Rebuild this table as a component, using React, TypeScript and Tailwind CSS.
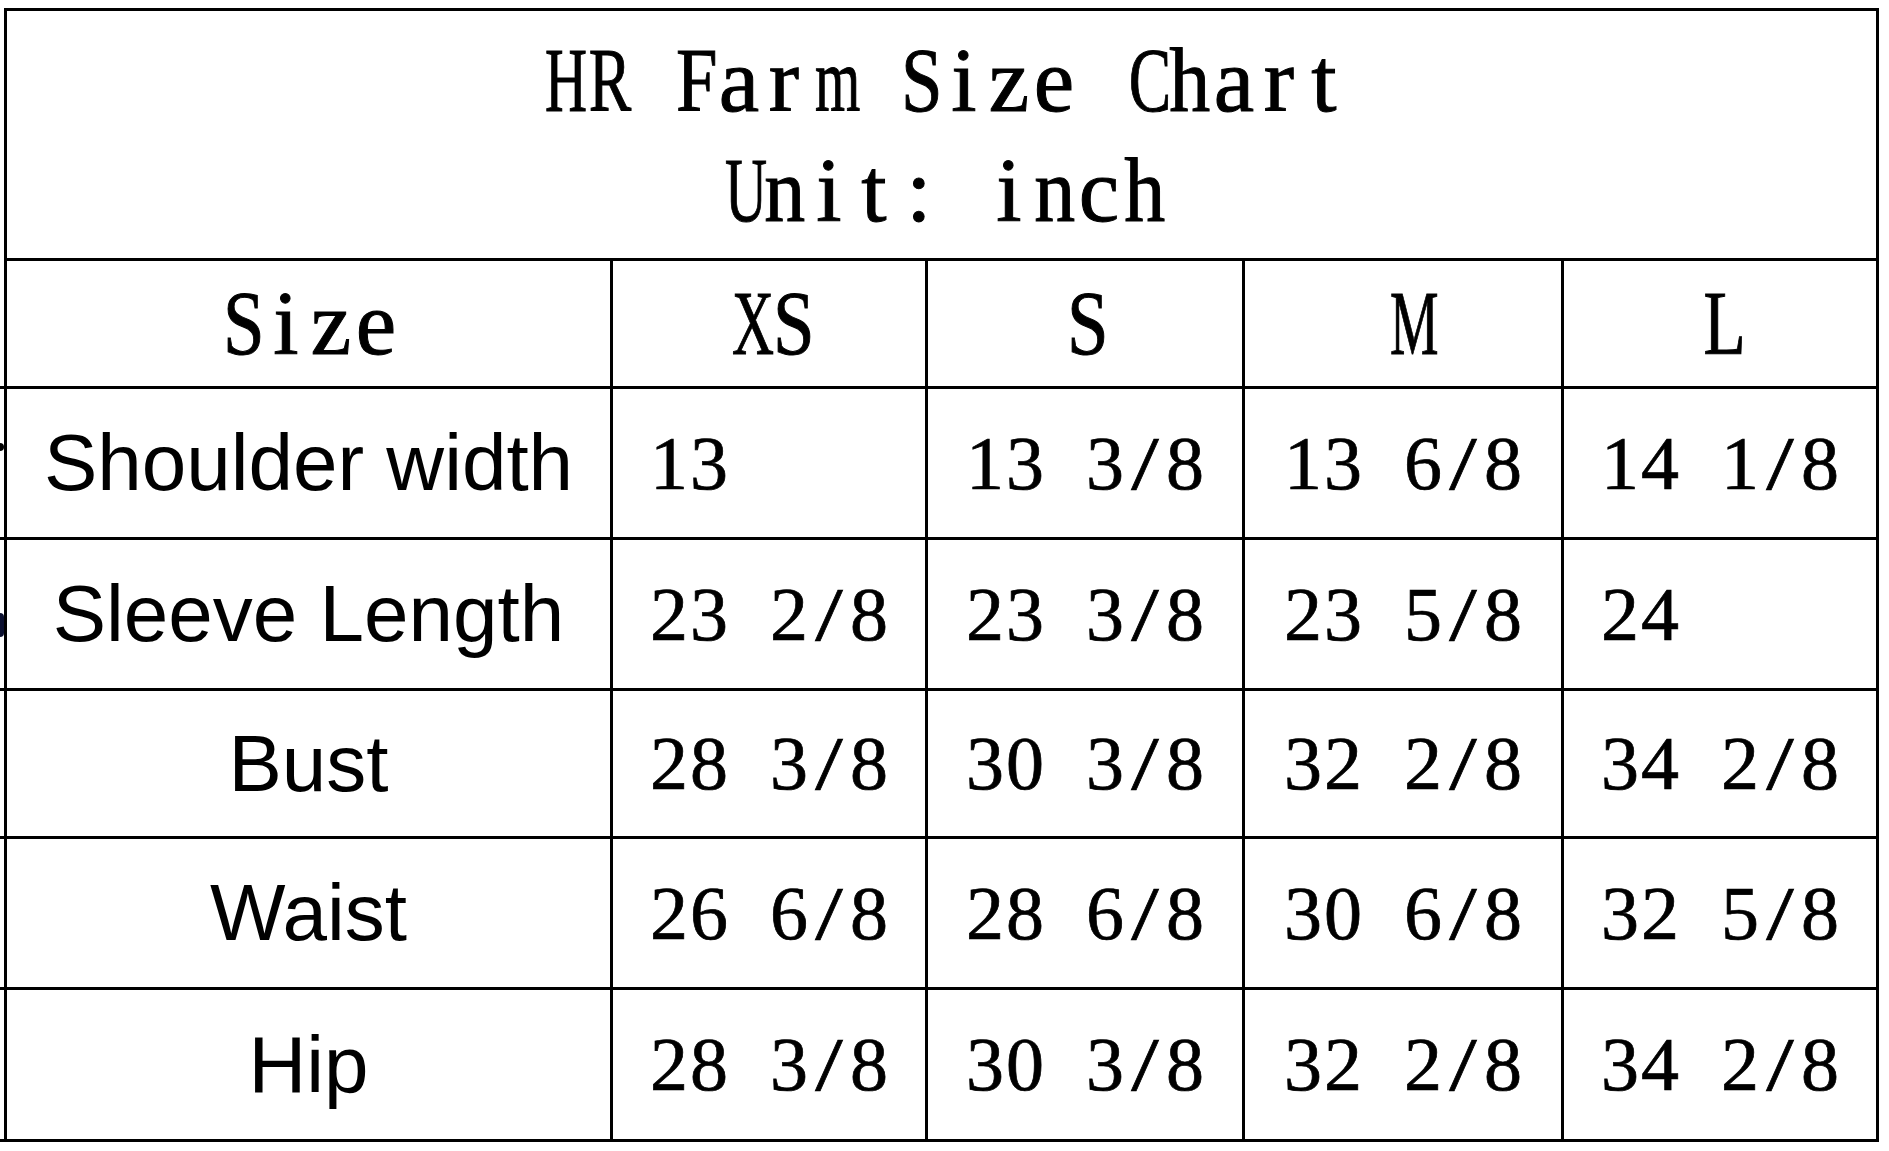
import React from "react";

const SERIF_NUM = "[font-family:'Liberation_Serif','Times_New_Roman',serif] [-webkit-text-stroke:0.7px_black]";
const SERIF_BIG = "[font-family:'Liberation_Serif','Times_New_Roman',serif] [-webkit-text-stroke:1px_black]";
const SANS = "[font-family:'Liberation_Sans',Arial,sans-serif]";

function bigClass(ch: string): string {
  const base = "inline-block w-[45px] text-center";
  if (ch === "H" || ch === "U" || ch === "X") return `${base} [transform:scaleX(0.64)]`;
  if (ch === "R" || ch === "C") return `${base} [transform:scaleX(0.7)]`;
  if (ch === "M") return `${base} [transform:scaleX(0.6)]`;
  if (ch === "m") return `${base} [transform:scaleX(0.64)]`;
  if (ch === "L") return `${base} [transform:scaleX(0.76)]`;
  if (ch === "F" || ch === "S") return `${base} [transform:scaleX(0.82)]`;
  if (ch === "n" || ch === "h") return `${base} [transform:scaleX(0.9)]`;
  return base;
}

function BigChars({ text }: { text: string }) {
  return (
    <>
      {text.split("").map((ch, i) => (
        <span key={i} className={bigClass(ch)}>
          {ch === " " ? "\u00a0" : ch}
        </span>
      ))}
    </>
  );
}

function NumChars({ text }: { text: string }) {
  const padded = text.padEnd(6, " ");
  return (
    <>
      {padded.split("").map((ch, i) => (
        <span
          key={i}
          className={
            ch === "/"
              ? "inline-block w-[40px] text-center [transform:scaleX(1.3)]"
              : "inline-block w-[40px] text-center"
          }
        >
          {ch === " " ? "\u00a0" : ch}
        </span>
      ))}
    </>
  );
}

type Row = {
  label: string;
  values: string[];
  h: string;
  lh: string;
  mark?: "dash" | "blob";
};

const rows: Row[] = [
  { label: "Shoulder width", values: ["13", "13 3/8", "13 6/8", "14 1/8"], h: "h-[151px]", lh: "leading-[148px]", mark: "dash" },
  { label: "Sleeve Length", values: ["23 2/8", "23 3/8", "23 5/8", "24"], h: "h-[151px]", lh: "leading-[148px]", mark: "blob" },
  { label: "Bust", values: ["28 3/8", "30 3/8", "32 2/8", "34 2/8"], h: "h-[148px]", lh: "leading-[145px]" },
  { label: "Waist", values: ["26 6/8", "28 6/8", "30 6/8", "32 5/8"], h: "h-[151px]", lh: "leading-[148px]" },
  { label: "Hip", values: ["28 3/8", "30 3/8", "32 2/8", "34 2/8"], h: "h-[152px]", lh: "leading-[149px]" },
];

const GRID = "grid grid-cols-[606px_315px_317px_319px_315px] border-l-[3px] border-black";
const CELL = "border-r-[3px] border-b-[3px] border-black text-center whitespace-nowrap overflow-hidden";

export default function App() {
  return (
    <div className="min-h-screen w-full bg-white text-black pt-[8px]">
      {/* Header */}
      <div className="flex">
        <div className="w-[4px] shrink-0" />
        <div className="w-[1875px] h-[253px] border-[3px] border-black">
          <div className={`${SERIF_BIG} text-[91px] leading-[110px] pt-[15px] text-center whitespace-nowrap`}>
            <div>
              <BigChars text="HR Farm Size Chart" />
            </div>
            <div>
              <BigChars text="Unit: inch" />
            </div>
          </div>
        </div>
      </div>

      {/* Size row */}
      <div className="flex">
        <div className="w-[4px] shrink-0 border-b-[3px] border-black" />
        <div className={GRID}>
          {["Size", "XS", "S", "M", "L"].map((s) => (
            <div key={s} className={`${CELL} ${SERIF_BIG} h-[128px] text-[91px] leading-[125px]`}>
              <BigChars text={s} />
            </div>
          ))}
        </div>
      </div>

      {/* Data rows */}
      {rows.map((r) => (
        <div key={r.label} className="flex">
          <div className="w-[4px] shrink-0 border-b-[3px] border-black flex flex-col">
            {r.mark === "dash" && <div className="mt-[54px] h-[8px] w-[4px] bg-black rounded-r-sm" />}
            {r.mark === "blob" && <div className="mt-[73px] h-[24px] w-[4px] bg-[#0b1030] rounded-r-sm" />}
          </div>
          <div className={GRID}>
            <div className={`${CELL} ${SANS} ${r.h} text-[80px] ${r.lh}`}>{r.label}</div>
            {r.values.map((v, i) => (
              <div key={i} className={`${CELL} ${SERIF_NUM} ${r.h} text-[76px] ${r.lh}`}>
                <NumChars text={v} />
              </div>
            ))}
          </div>
        </div>
      ))}
    </div>
  );
}
